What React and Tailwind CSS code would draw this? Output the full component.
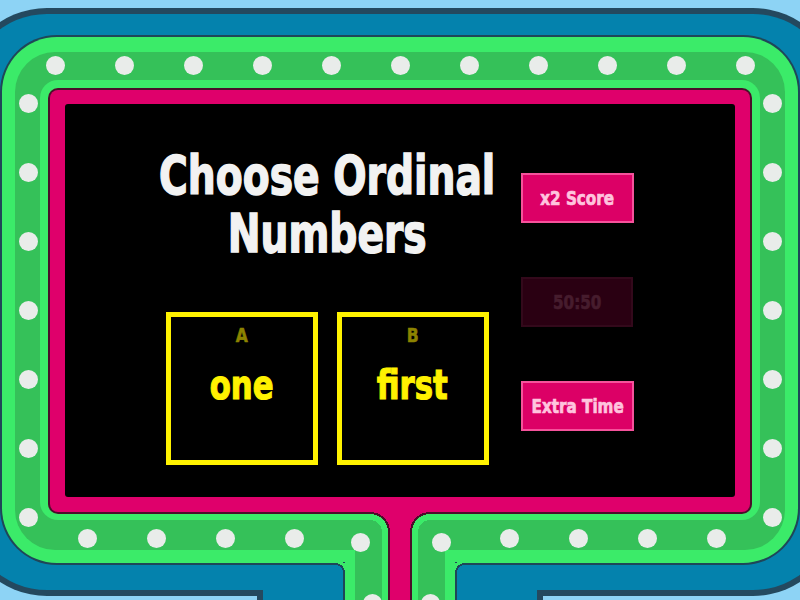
import React from "react";

const BULB = "w-[19px] h-[19px] rounded-full bg-[#e9ecea] shrink-0";

function Bulb({ className = "" }) {
  return <div className={BULB + " " + className} />;
}

function BulbRow({ count, className }) {
  return (
    <div className={"absolute flex gap-[50px] " + className}>
      {Array.from({ length: count }, (_, i) => (
        <Bulb key={i} />
      ))}
    </div>
  );
}

function BulbColumn({ count, className }) {
  return (
    <div className={"absolute flex flex-col gap-[50px] " + className}>
      {Array.from({ length: count }, (_, i) => (
        <Bulb key={i} />
      ))}
    </div>
  );
}

function AnswerBox({ letter, word }) {
  return (
    <div className="w-[152px] h-[153px] border-[5px] border-[#fff200] flex flex-col items-center">
      <div className="mt-[8px] text-[20px] leading-[20px] font-bold text-[#8c8300] scale-x-[0.78] [-webkit-text-stroke:0.6px_#8c8300]">
        {letter}
      </div>
      <div className="mt-[20px] text-[41px] leading-[41px] font-bold text-[#fff200] scale-x-[0.75] [-webkit-text-stroke:1.2px_#fff200]">
        {word}
      </div>
    </div>
  );
}

function PowerButton({ label, dim }) {
  return (
    <div
      className={
        dim
          ? "w-[112px] h-[50px] border-2 border-[#33091b] bg-[#2a0012] flex items-center justify-center"
          : "w-[113px] h-[50px] border-2 border-[#f5529b] bg-[#dc0066] flex items-center justify-center"
      }
    >
      <span
        className={
          dim
            ? "block text-[19px] font-bold text-[#461c2d] scale-x-[0.8] whitespace-nowrap [-webkit-text-stroke:0.7px_#461c2d]"
            : "block text-[19px] font-bold text-[#ffc4de] scale-x-[0.8] whitespace-nowrap [-webkit-text-stroke:0.7px_#ffc4de]"
        }
      >
        {label}
      </span>
    </div>
  );
}

export default function App() {
  return (
    <div className="relative w-[800px] h-[600px] overflow-hidden bg-[#8dd3f5] font-['DejaVu_Sans',sans-serif]">
      {/* TV frame: navy rim > blue band > outline > green ring > bulb lane > inner green > outline > pink > screen */}
      <div className="absolute left-[-39px] top-[8px] w-[878px] h-[588px] rounded-[86px] bg-[#24495f] p-[6px] flex">
        <div className="flex-1 flex rounded-[80px] bg-[#0482ad] pt-[21px] px-[33px] pb-[25px]">
          <div className="flex-1 flex rounded-[57px] bg-[#1f4658] p-[2px]">
            <div className="flex-1 flex rounded-[55px] bg-[#3beb69] pt-[15px] px-[13px] pb-[13px]">
              <div className="flex-1 flex rounded-[40px] bg-[#35c159] pt-[28px] px-[25px] pb-[30px]">
                <div className="flex-1 flex rounded-[18px] bg-[#3beb69] pt-[8px] px-[8px] pb-[6px]">
                  <div className="flex-1 flex rounded-[10px] bg-[#4a0f2a] p-[2px]">
                    <div className="flex-1 flex rounded-[8px] bg-[#df006b] pt-[14px] px-[15px] pb-[15px]">
                      {/* screen */}
                      <div className="flex-1 flex rounded-[3px] bg-black pl-[90px]">
                        <div className="w-[344px] pt-[43px] flex flex-col items-center">
                          <h1 className="w-max text-center text-[53px] leading-[58px] font-bold text-[#f2f2f2] scale-x-[0.74] whitespace-nowrap [-webkit-text-stroke:1.6px_#f2f2f2]">
                            Choose Ordinal
                            <br />
                            Numbers
                          </h1>
                          <div className="mt-[49px] flex gap-[19px]">
                            <AnswerBox letter="A" word="one" />
                            <AnswerBox letter="B" word="first" />
                          </div>
                        </div>
                        <div className="ml-[22px] pt-[69px] flex flex-col gap-[54px]">
                          <PowerButton label="x2 Score" />
                          <PowerButton label="50:50" dim />
                          <PowerButton label="Extra Time" />
                        </div>
                      </div>
                    </div>
                  </div>
                </div>
              </div>
            </div>
          </div>
        </div>
      </div>

      {/* stand below the screen: the same layers running down, each one only showing below its own edge */}
      <div className="absolute left-[257px] top-[512px] w-[286px] h-[88px] flex px-[6px] bg-[linear-gradient(transparent_78px,#24495f_78px)]">
        <div className="flex-1 flex px-[80px] bg-[linear-gradient(transparent_53px,#0482ad_53px)]">
          <div className="flex-1 flex px-[2px] bg-[linear-gradient(transparent_50px,#1f4658_50px)]">
            <div className="flex-1 flex px-[10px] bg-[linear-gradient(transparent_38px,#3beb69_38px)]">
              <div className="flex-1 flex px-[27px] bg-[linear-gradient(transparent_8px,#35c159_8px)]">
                <div className="flex-1 flex px-[6px] bg-[#3beb69]">
                  <div className="flex-1 flex px-[2px] bg-[#4a0f2a]">
                    <div className="flex-1 bg-[#df006b]" />
                  </div>
                </div>
              </div>
            </div>
          </div>
        </div>
      </div>

      {/* rounded joins where the stand meets the frame */}
      <div className="absolute left-[335px] top-[563px] w-[10px] h-[10px] bg-[radial-gradient(circle_at_0_100%,#0482ad_8px,#1f4658_8px,#1f4658_10px,#3beb69_10px)]" />
      <div className="absolute left-[455px] top-[563px] w-[10px] h-[10px] bg-[radial-gradient(circle_at_100%_100%,#0482ad_8px,#1f4658_8px,#1f4658_10px,#3beb69_10px)]" />
      <div className="absolute left-[370px] top-[512px] w-[20px] h-[20px] bg-[radial-gradient(circle_at_0_100%,#35c159_12px,#3beb69_12px,#3beb69_18px,#4a0f2a_18px,#4a0f2a_20px,#df006b_20px)]" />
      <div className="absolute left-[410px] top-[512px] w-[20px] h-[20px] bg-[radial-gradient(circle_at_100%_100%,#35c159_12px,#3beb69_12px,#3beb69_18px,#4a0f2a_18px,#4a0f2a_20px,#df006b_20px)]" />

      {/* bulbs */}
      <BulbRow count={11} className="left-[45.5px] top-[55.5px]" />
      <BulbColumn count={7} className="left-[18.5px] top-[93.5px]" />
      <BulbColumn count={7} className="left-[762.5px] top-[93.5px]" />
      <BulbRow count={4} className="left-[77.5px] top-[528.5px]" />
      <BulbRow count={4} className="left-[499.5px] top-[528.5px]" />
      <Bulb className="absolute left-[350.5px] top-[532.5px]" />
      <Bulb className="absolute left-[431.5px] top-[532.5px]" />
      <Bulb className="absolute left-[362.5px] top-[593.5px]" />
      <Bulb className="absolute left-[420.5px] top-[593.5px]" />
    </div>
  );
}
